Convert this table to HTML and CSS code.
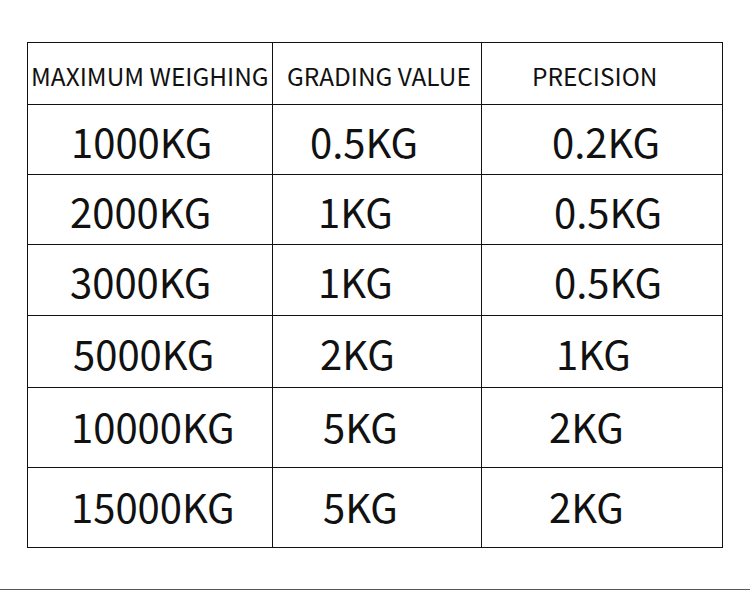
FILE: index.html
```html
<!DOCTYPE html>
<html>
<head>
<meta charset="utf-8">
<link rel="stylesheet" href="styles.css">
</head>
<body>
<div class="page">
  <table class="spec">
    <colgroup>
      <col class="c1"><col class="c2"><col class="c3">
    </colgroup>
    <tr class="head">
      <th class="h1">MAXIMUM WEIGHING</th>
      <th class="h2">GRADING VALUE</th>
      <th class="h3">PRECISION</th>
    </tr>
    <tr class="r70">
      <td class="p73">1000KG</td>
      <td class="p312">0.5KG</td>
      <td class="p554">0.2KG</td>
    </tr>
    <tr class="r70">
      <td class="p72">2000KG</td>
      <td class="p320">1KG</td>
      <td class="p556">0.5KG</td>
    </tr>
    <tr class="r71">
      <td class="p72">3000KG</td>
      <td class="p320">1KG</td>
      <td class="p556">0.5KG</td>
    </tr>
    <tr class="r72">
      <td class="p75">5000KG</td>
      <td class="p322">2KG</td>
      <td class="p558">1KG</td>
    </tr>
    <tr class="r80">
      <td class="p73">10000KG</td>
      <td class="p325">5KG</td>
      <td class="p551">2KG</td>
    </tr>
    <tr class="r80">
      <td class="p73">15000KG</td>
      <td class="p325">5KG</td>
      <td class="p551">2KG</td>
    </tr>
  </table>
  <div class="edge"></div>
</div>
</body>
</html>
```
FILE: styles.css
```css
html, body {
  margin: 0;
  padding: 0;
  background: #ffffff;
}
.page {
  width: 750px;
  height: 590px;
  display: flex;
  flex-direction: column;
  padding: 42px 0 0 27px;
  box-sizing: border-box;
  font-family: "Noto Sans CJK SC", "Noto Sans", sans-serif;
  color: #111111;
}
.spec {
  border-collapse: collapse;
  table-layout: fixed;
  width: 695px;
}
.c1 { width: 245px; }
.c2 { width: 209px; }
.c3 { width: 241px; }
.spec th, .spec td {
  border: 1px solid #111111;
  padding: 0;
  text-align: left;
  vertical-align: middle;
  white-space: nowrap;
  overflow: visible;
}
.spec th {
  font-weight: 400;
  font-size: 24.4px;
  line-height: 28px;
  padding-top: 4px;
}
.head { height: 62px; }
.spec .h1 { padding-left: 3px; }
.spec .h2 { padding-left: 14px; }
.spec .h3 { padding-left: 50px; }
.spec td {
  font-size: 40px;
  line-height: 46px;
  padding-top: 2px;
}
.r70 { height: 70px; }
.r71 { height: 71px; }
.r72 { height: 72px; }
.r80 { height: 80px; }
.spec .r80 td { padding-top: 0; padding-bottom: 3px; }
.spec .p72 { padding-left: 42px; }
.spec .p73 { padding-left: 43px; }
.spec .p75 { padding-left: 45px; }
.spec .p312 { padding-left: 37px; }
.spec .p320 { padding-left: 45px; }
.spec .p322 { padding-left: 47px; }
.spec .p325 { padding-left: 50px; }
.spec .p551 { padding-left: 67px; }
.spec .p554 { padding-left: 70px; }
.spec .p556 { padding-left: 72px; }
.spec .p558 { padding-left: 74px; }
.edge {
  margin-top: auto;
  margin-left: -27px;
  height: 1px;
  width: 750px;
  background: #55585c;
}
```
